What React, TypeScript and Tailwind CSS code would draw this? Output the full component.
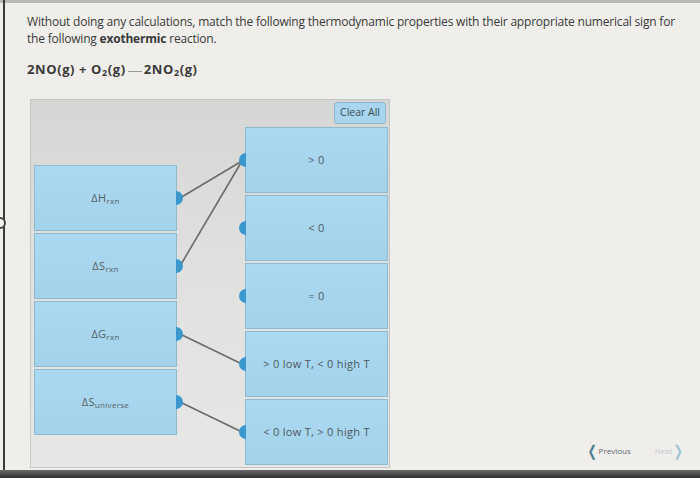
import React from "react";

const LEFT = [
  { key: "h", main: "H", sub: "rxn" },
  { key: "s", main: "S", sub: "rxn" },
  { key: "g", main: "G", sub: "rxn" },
  { key: "u", main: "S", sub: "universe" },
];

const RIGHT = ["> 0", "< 0", "= 0", "> 0 low T, < 0 high T", "< 0 low T, > 0 high T"];

// connections drawn in panel coordinates
const LINKS = [
  [149, 98, 211, 61],
  [149, 166, 211, 61],
  [149, 234, 211, 264],
  [149, 302, 211, 332],
];

function Box({ children, side }: { children: React.ReactNode; side: "left" | "right" }) {
  return (
    <div className="relative flex h-[66px] w-[143px] items-center justify-center border border-[#8fb9cf] bg-gradient-to-b from-[#aad9f1] to-[#a3d3eb] text-[11px] tracking-[0.3px] text-[#4f585d]">
      {children}
      {side === "left" ? (
        <span className="absolute right-[-7px] top-1/2 h-[14px] w-[7px] -translate-y-1/2 rounded-r-full bg-[#3a98cf]" />
      ) : (
        <span className="absolute left-[-7px] top-1/2 h-[14px] w-[7px] -translate-y-1/2 rounded-l-full bg-[#3a98cf]" />
      )}
    </div>
  );
}

export default function App() {
  return (
    <div
      className="relative flex h-[478px] w-[700px] flex-col overflow-hidden bg-[#efeeea] text-[#3a3a3a]"
      style={{ fontFamily: '"Open Sans", "DejaVu Sans", sans-serif' }}
    >
      <div className="absolute left-0 top-0 h-[3px] w-full bg-[#b9b9b7]" />
      <div className="absolute left-[3px] top-0 h-[470px] w-[2px] bg-[#3a3a3a]" />
      <div className="absolute left-[-6px] top-[217px] h-[12px] w-[12px] rounded-full border-2 border-[#444] bg-[#f4f4f2]" />

      <div className="pl-[27px] pt-[13px] text-[12px] leading-[17px] tracking-[-0.2px]">
        <p>Without doing any calculations, match the following thermodynamic properties with their appropriate numerical sign for</p>
        <p>
          the following <b>exothermic</b> reaction.
        </p>
        <p className="mt-[14px] flex items-center text-[13px] font-bold tracking-[0.6px]">
          <span>
            2NO(g) + O<sub className="text-[9px]">2</sub>(g)
          </span>
          <span className="mx-[2px] mt-[3px] h-px w-[14px] bg-[#9a9a9a]" />
          <span>
            2NO<sub className="text-[9px]">2</sub>(g)
          </span>
        </p>
      </div>

      <div className="relative ml-[30px] mt-[21px] flex h-[369px] w-[360px] justify-between border border-[#c5c5c3] bg-gradient-to-b from-[#d6d6d5] via-[#e1e1e0] to-[#e7e7e5] pl-[3px] pr-[1px]">
        <svg className="pointer-events-none absolute inset-0" width="358" height="367">
          {LINKS.map(([x1, y1, x2, y2], i) => (
            <line key={i} x1={x1} y1={y1} x2={x2} y2={y2} stroke="#6b6b6b" strokeWidth="1.6" />
          ))}
        </svg>

        <div className="flex flex-col gap-[2px] pt-[65px]">
          {LEFT.map((l) => (
            <Box key={l.key} side="left">
              <span className="text-[11px] text-[#5a6165]">
                Δ{l.main}
                <sub className="text-[8px]">{l.sub}</sub>
              </span>
            </Box>
          ))}
        </div>

        <div className="flex flex-col items-end">
          <button className="mr-[2px] mt-[2px] h-[22px] w-[52px] rounded-[3px] border border-[#8db4ca] bg-[#a7d6ee] text-[10.5px] text-[#3c4a52]">
            Clear All
          </button>
          <div className="mt-[3px] flex flex-col gap-[2px]">
            {RIGHT.map((r) => (
              <Box key={r} side="right">
                {r}
              </Box>
            ))}
          </div>
        </div>
      </div>

      <div className="absolute left-[586px] top-[443px] flex items-center text-[8px]">
        <span className="scale-x-75 text-[15px] leading-none text-[#4f7f90]">❮</span>
        <span className="text-[#5d6a70]">Previous</span>
        <span className="ml-[24px] text-[#c2cacd]">Next</span>
        <span className="scale-x-75 text-[15px] leading-none text-[#9fc6d6]">❯</span>
      </div>

      <div className="absolute bottom-0 left-0 h-[8px] w-full bg-gradient-to-b from-[#6a6a6a] to-[#2f2f2f]" />
    </div>
  );
}
